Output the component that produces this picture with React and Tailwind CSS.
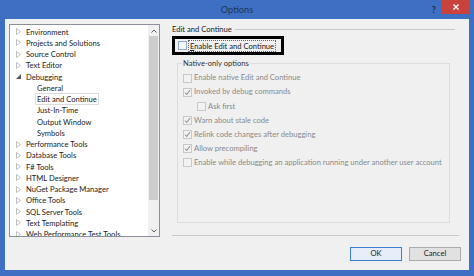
const treeItems = [
  { label: "Environment", arrow: "closed" },
  { label: "Projects and Solutions", arrow: "closed" },
  { label: "Source Control", arrow: "closed" },
  { label: "Text Editor", arrow: "closed" },
  { label: "Debugging", arrow: "open" },
  { label: "General", child: true },
  { label: "Edit and Continue", child: true, selected: true },
  { label: "Just-In-Time", child: true },
  { label: "Output Window", child: true },
  { label: "Symbols", child: true },
  { label: "Performance Tools", arrow: "closed" },
  { label: "Database Tools", arrow: "closed" },
  { label: "F# Tools", arrow: "closed" },
  { label: "HTML Designer", arrow: "closed" },
  { label: "NuGet Package Manager", arrow: "closed" },
  { label: "Office Tools", arrow: "closed" },
  { label: "SQL Server Tools", arrow: "closed" },
  { label: "Text Templating", arrow: "closed" },
  { label: "Web Performance Test Tools", arrow: "closed" },
];

const options = [
  { label: "Enable native Edit and Continue", checked: false },
  { label: "Invoked by debug commands", checked: true },
  { label: "Ask first", checked: false, indent: true },
  { label: "Warn about stale code", checked: true },
  { label: "Relink code changes after debugging", checked: true },
  { label: "Allow precompiling", checked: true },
  { label: "Enable while debugging an application running under another user account", checked: false },
];

function Check({ checked, disabled }) {
  return (
    <span
      className={
        "flex h-[9px] w-[9px] shrink-0 items-center justify-center border " +
        (disabled ? "border-[#c8c8c8] bg-[#f2f2f2]" : "border-[#8fa8d0] bg-[#f4f7fc]")
      }
    >
      {checked && (
        <svg width="7" height="7" viewBox="0 0 7 7">
          <path d="M1 3.6 L2.8 5.4 L6 1.2" fill="none" stroke="#9a9a9a" strokeWidth="1.1" />
        </svg>
      )}
    </span>
  );
}

function TreeArrow({ kind }) {
  if (kind === "open") {
    return (
      <svg width="5" height="5" viewBox="0 0 5 5">
        <path d="M5 0 L5 5 L0 5 Z" fill="#555" />
      </svg>
    );
  }
  if (kind === "closed") {
    return (
      <svg width="5" height="7" viewBox="0 0 5 7">
        <path d="M0.5 0.5 L4.5 3.5 L0.5 6.5 Z" fill="none" stroke="#b0b0b0" strokeWidth="0.8" />
      </svg>
    );
  }
  return null;
}

export default function App() {
  return (
    <div
      className="flex h-[276px] w-[474px] flex-col overflow-hidden bg-[#3d6fc2] text-[7.6px] text-[#222]"
      style={{ fontFamily: 'Lato, "Noto Sans", sans-serif' }}
    >
      <div className="relative flex h-[19px] shrink-0 items-center justify-center">
        <span className="text-[9.2px] text-[#22355a]">Options</span>
        <span className="absolute right-[38px] top-[3px] text-[9px] font-bold text-[#1c2d4e]">?</span>
        <div className="absolute right-[5px] top-0 flex h-[14px] w-[27px] items-center justify-center bg-[#c9433c]">
          <svg width="6" height="6" viewBox="0 0 6 6">
            <path d="M0.5 0.5 L5.5 5.5 M5.5 0.5 L0.5 5.5" stroke="#fff" strokeWidth="1.4" />
          </svg>
        </div>
      </div>

      <div className="mx-[5px] mb-[6px] flex min-w-0 flex-1 flex-col overflow-hidden bg-[#f0f0f0] px-[4px] pt-[5px]">
        <div className="flex h-[213px] gap-[12px]">
          <div className="flex w-[151px] shrink-0 border border-[#8c9099] bg-white">
            <div className="min-w-0 flex-1 overflow-hidden pt-[1px]">
              {treeItems.map((it) => (
                <div key={it.label} className="flex h-[11.25px] items-center whitespace-nowrap">
                  <span className="flex w-[14px] shrink-0 justify-end pr-[3px]">
                    {!it.child && <TreeArrow kind={it.arrow} />}
                  </span>
                  <span
                    className={
                      "leading-[10px] " +
                      (it.child ? "ml-[11px] " : "") +
                      (it.selected ? "border border-[#dcdcdc] px-[1px]" : "px-[2px]")
                    }
                  >
                    {it.label}
                  </span>
                </div>
              ))}
            </div>
            <div className="flex w-[11px] shrink-0 flex-col items-center bg-[#f0f0f0]">
              <div className="flex h-[11px] items-center">
                <svg width="6" height="4" viewBox="0 0 6 4">
                  <path d="M0.5 3.5 L3 1 L5.5 3.5" fill="none" stroke="#606060" strokeWidth="1" />
                </svg>
              </div>
              <div className="h-[164px] w-[9px] bg-[#cdcdcd]" />
              <div className="flex-1" />
              <div className="flex h-[10px] items-center">
                <svg width="6" height="4" viewBox="0 0 6 4">
                  <path d="M0.5 0.5 L3 3 L5.5 0.5" fill="none" stroke="#606060" strokeWidth="1" />
                </svg>
              </div>
            </div>
          </div>

          <div className="flex min-w-0 flex-1 flex-col pr-[6px]">
            <div className="flex h-[11px] items-center gap-[3px] pr-[4px]">
              <span className="whitespace-nowrap">Edit and Continue</span>
              <div className="h-px flex-1 bg-[#c8c8c8]" />
            </div>
            <div className="mt-[1px] flex h-[19px] w-[112px] items-center gap-[1px] border-[3px] border-black bg-[#f0f0f0] pl-[3px]">
              <Check />
              <span className="whitespace-nowrap border border-dotted border-[#666] px-[1px] leading-[10px]">
                <span className="underline">E</span>nable Edit and Continue
              </span>
            </div>

            <div className="relative ml-[5px] mr-[9px] mt-[8px] h-[160px] border border-[#dcdcdc]">
              <span className="absolute -top-[6px] left-[4px] bg-[#f0f0f0] px-[1px] text-[#333]">
                Native-only options
              </span>
              <div className="flex flex-col gap-[4.1px] pl-[5px] pt-[9px]">
                {options.map((o) => (
                  <div
                    key={o.label}
                    className={"flex h-[10px] items-center gap-[2px] whitespace-nowrap text-[#8a8a8a] " + (o.indent ? "pl-[14px]" : "")}
                  >
                    <Check checked={o.checked} disabled />
                    <span>{o.label}</span>
                  </div>
                ))}
              </div>
            </div>
            <div className="flex-1" />
            <div className="mb-[1px] h-px bg-[#c8c8c8]" />
          </div>
        </div>

        <div className="mt-[10px] flex justify-end gap-[7px] pr-[4px]">
          <button className="h-[14px] w-[52px] border border-[#3c7fd6] bg-[#e5eef9] text-[7.6px] leading-none">
            OK
          </button>
          <button className="h-[14px] w-[52px] border border-[#acacac] bg-[#e1e1e1] text-[7.6px] leading-none">
            Cancel
          </button>
        </div>
      </div>
    </div>
  );
}
